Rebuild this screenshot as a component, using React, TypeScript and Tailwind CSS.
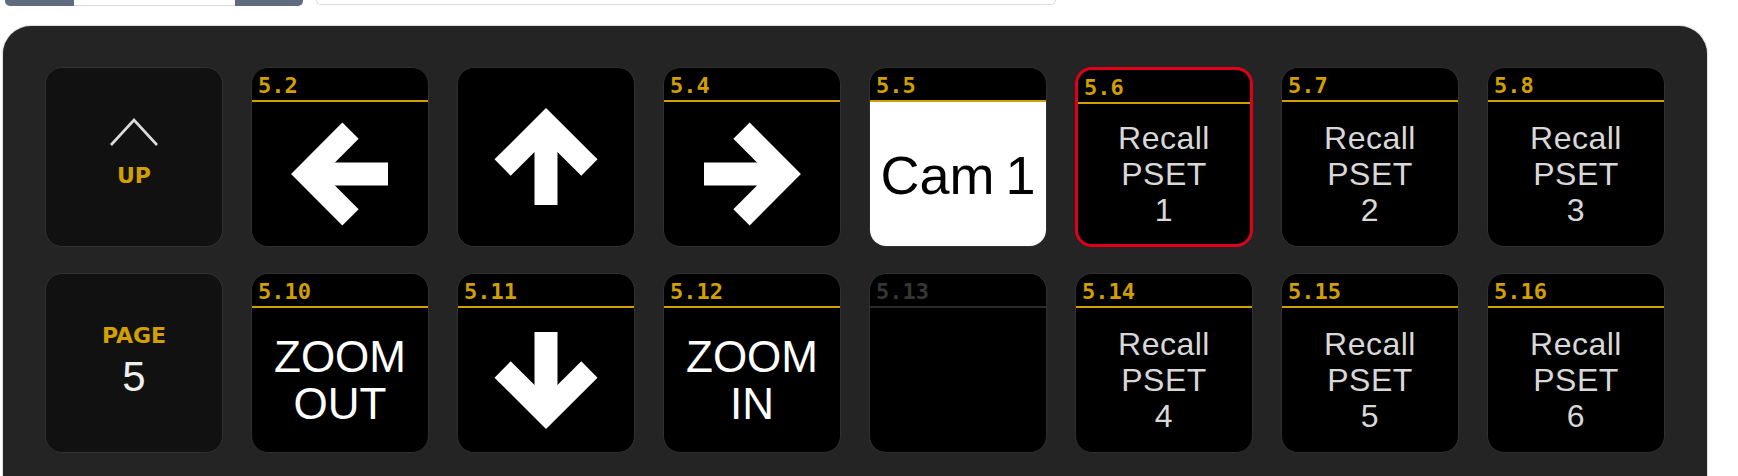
const YELLOW = '#d1a000';

type Dir = 'left' | 'up' | 'right' | 'down';

const angles: Record<Dir, number> = { left: 0, up: 90, right: 180, down: 270 };

const Arrow = ({ dir }: { dir: Dir }) => (
  <svg width="106" height="106" viewBox="0 0 106 106" fill="none">
    <g transform={`rotate(${angles[dir]} 53 53)`} stroke="#fff" strokeWidth="23">
      <path d="M63.5 9.6 L20.3 53 L63.5 96.4" strokeLinejoin="miter" strokeMiterlimit="4" />
      <path d="M34 53 H101" />
    </g>
  </svg>
);

type Key = {
  id: string;
  label?: string;
  kind: 'arrow' | 'text' | 'cam' | 'recall' | 'empty';
  dir?: Dir;
  lines?: string[];
  active?: boolean;
};

const row1: Key[] = [
  { id: '5.2', label: '5.2', kind: 'arrow', dir: 'left' },
  { id: '5.3', kind: 'arrow', dir: 'up' },
  { id: '5.4', label: '5.4', kind: 'arrow', dir: 'right' },
  { id: '5.5', label: '5.5', kind: 'cam' },
  { id: '5.6', label: '5.6', kind: 'recall', lines: ['Recall', 'PSET', '1'], active: true },
  { id: '5.7', label: '5.7', kind: 'recall', lines: ['Recall', 'PSET', '2'] },
  { id: '5.8', label: '5.8', kind: 'recall', lines: ['Recall', 'PSET', '3'] },
];

const row2: Key[] = [
  { id: '5.10', label: '5.10', kind: 'text', lines: ['ZOOM', 'OUT'] },
  { id: '5.11', label: '5.11', kind: 'arrow', dir: 'down' },
  { id: '5.12', label: '5.12', kind: 'text', lines: ['ZOOM', 'IN'] },
  { id: '5.13', label: '5.13', kind: 'empty' },
  { id: '5.14', label: '5.14', kind: 'recall', lines: ['Recall', 'PSET', '4'] },
  { id: '5.15', label: '5.15', kind: 'recall', lines: ['Recall', 'PSET', '5'] },
  { id: '5.16', label: '5.16', kind: 'recall', lines: ['Recall', 'PSET', '6'] },
];

const KeyCard = ({ k }: { k: Key }) => {
  const disabled = k.kind === 'empty';
  return (
    <div
      className={`h-[180px] rounded-[17px] overflow-hidden flex flex-col bg-black ${
        k.active ? 'border-[3px] border-[#e0001a]' : 'border border-[#303030]'
      }`}
    >
      {k.label && (
        <div
          className={`h-[34px] shrink-0 border-b-2 pl-[6px] pt-[7px] ${
            disabled ? 'border-[#2b2b2b] text-[#363636]' : 'border-[#d1a000] text-[#d1a000]'
          }`}
        >
          <span className="block text-[22px] leading-none font-bold font-['DejaVu_Sans_Mono',monospace]">{k.label}</span>
        </div>
      )}
      <div
        className={`flex-1 flex flex-col items-center justify-center text-center ${
          k.kind === 'cam' ? 'bg-white' : ''
        }`}
      >
        {k.kind === 'arrow' && k.dir && <Arrow dir={k.dir} />}
        {k.kind === 'cam' && (
          <span className="text-[54px] leading-none text-black font-['Liberation_Sans',Arial,sans-serif] pt-[2px] [word-spacing:-4px]">
            Cam 1
          </span>
        )}
        {k.kind === 'recall' &&
          k.lines?.map((l) => (
            <span
              key={l}
              className="block text-[32px] leading-[36px] tracking-[0.5px] text-[#d8d8d8] font-['Liberation_Sans',Arial,sans-serif]"
            >
              {l}
            </span>
          ))}
        {k.kind === 'text' &&
          k.lines?.map((l) => (
            <span
              key={l}
              className="block text-[44px] leading-[47px] text-white font-['Liberation_Sans',Arial,sans-serif]"
            >
              {l}
            </span>
          ))}
      </div>
    </div>
  );
};

const App = () => {
  return (
    <div className="w-[1738px] h-[476px] overflow-hidden bg-white">
      {/* bottoms of the toolbar controls above */}
      <div className="flex items-start h-[6px] pl-[5px]">
        <div className="flex h-[6px]">
          <div className="w-[69px] bg-[#5f6b7e] rounded-bl-[5px]" />
          <div className="w-[161px] bg-white border-b border-[#d6d9e0]" />
          <div className="w-[68px] bg-[#5f6b7e] rounded-br-[5px]" />
        </div>
        <div className="ml-[13px] w-[740px] h-[5px] border border-t-0 border-[#dadde3] rounded-b-[5px] bg-white" />
      </div>

      <div className="mt-[20px] ml-[3px] w-[1704px] rounded-t-[28px] bg-[#242424] px-[42px] pt-[41px] pb-[41px] shadow-[0_0_2px_rgba(0,0,0,0.45)]">
        <div className="grid grid-cols-8 gap-x-[28px] gap-y-[26px]">
          <div className="h-[180px] rounded-[17px] border border-[#303030] bg-[#111111] flex flex-col items-center justify-center pb-[11px]">
            <svg width="50" height="30" viewBox="0 0 50 30" fill="none">
              <path d="M2 28 L25 3 L48 28" stroke="#dcdcdc" strokeWidth="2.6" />
            </svg>
            <span className="mt-[18px] text-[22px] leading-none font-bold text-[#d1a000] font-['DejaVu_Sans',sans-serif]">UP</span>
          </div>
          {row1.map((k) => (
            <KeyCard key={k.id} k={k} />
          ))}

          <div className="h-[180px] rounded-[17px] border border-[#303030] bg-[#111111] flex flex-col items-center justify-center pb-[4px]">
            <span className="text-[22px] leading-none font-bold text-[#d1a000] font-['DejaVu_Sans',sans-serif]">PAGE</span>
            <span className="mt-[9px] text-[42px] leading-none text-[#eeeeee] font-['Liberation_Sans',Arial,sans-serif]">5</span>
          </div>
          {row2.map((k) => (
            <KeyCard key={k.id} k={k} />
          ))}
        </div>
      </div>
    </div>
  );
};

export default App;
